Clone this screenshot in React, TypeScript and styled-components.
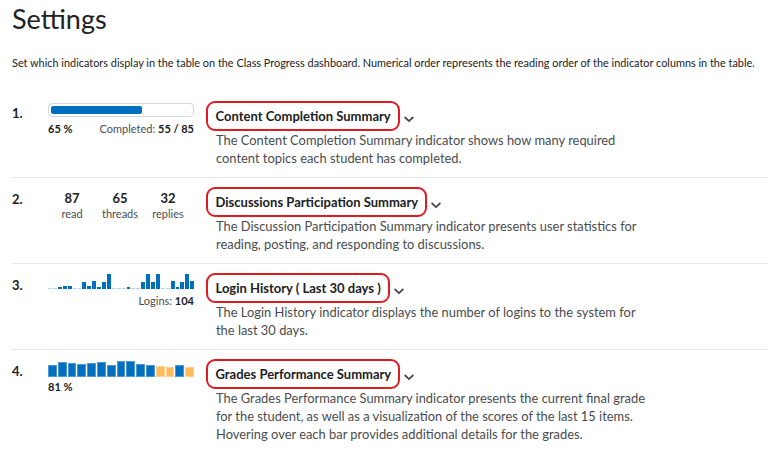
import React from 'react';
import styled, { createGlobalStyle } from 'styled-components';

const GlobalStyle = createGlobalStyle`
	* {
		box-sizing: border-box;
	}

	body {
		margin: 0;
		background: #ffffff;
		font-family: Lato, 'Noto Sans', sans-serif;
		color: #202122;
	}
`;

const loginDays = [0, 0, 1, 2, 2, 0, 0, 6, 2, 7, 1, 6, 14, 0, 0, 0, 1, 0, 0, 6, 14, 6, 14, 0, 0, 7, 1, 6, 14, 7];

const grades = [
	{ h: 12, low: false },
	{ h: 15, low: false },
	{ h: 14, low: false },
	{ h: 13, low: false },
	{ h: 14, low: false },
	{ h: 15, low: false },
	{ h: 12, low: false },
	{ h: 16, low: false },
	{ h: 16, low: false },
	{ h: 13, low: false },
	{ h: 12, low: false },
	{ h: 11, low: true },
	{ h: 10, low: true },
	{ h: 12, low: false },
	{ h: 10, low: true },
];

const Chevron = () => (
	<svg width='10' height='7' viewBox='0 0 10 7' fill='none'>
		<path d='M1.2 1.5 L5 5.2 L8.8 1.5' stroke='#494c4e' strokeWidth='1.8' strokeLinecap='round' strokeLinejoin='round' />
	</svg>
);

const CompletionGraphic = () => (
	<div>
		<ProgressTrack>
			<ProgressFill $percent={65} />
		</ProgressTrack>
		<CaptionRow>
			<b>65 %</b>
			<span>
				Completed: <b>55 / 85</b>
			</span>
		</CaptionRow>
	</div>
);

const DiscussionGraphic = () => (
	<StatGrid>
		{[
			{ value: 87, label: 'read' },
			{ value: 65, label: 'threads' },
			{ value: 32, label: 'replies' },
		].map(stat => (
			<Stat key={stat.label}>
				<strong>{stat.value}</strong>
				<span>{stat.label}</span>
			</Stat>
		))}
	</StatGrid>
);

const LoginGraphic = () => (
	<div>
		<LoginChart>
			{loginDays.map((value, i) => (
				<LoginBar key={i} $empty={value === 0} style={{ height: value === 0 ? 1 : value + 1 }} />
			))}
		</LoginChart>
		<CaptionRow $align='flex-end'>
			<span>
				Logins: <b>104</b>
			</span>
		</CaptionRow>
	</div>
);

const GradesGraphic = () => (
	<div>
		<GradesChart>
			{grades.map((grade, i) => (
				<GradeBar key={i} $low={grade.low} style={{ height: grade.h }} />
			))}
		</GradesChart>
		<CaptionRow $gap={3}>
			<b>81 %</b>
		</CaptionRow>
	</div>
);

// descriptions keep the line breaks of the settings page
const indicators = [
	{
		id: 1,
		title: 'Content Completion Summary',
		description: [
			'The Content Completion Summary indicator shows how many required',
			'content topics each student has completed.',
		],
		graphic: <CompletionGraphic />,
	},
	{
		id: 2,
		title: 'Discussions Participation Summary',
		description: [
			'The Discussion Participation Summary indicator presents user statistics for',
			'reading, posting, and responding to discussions.',
		],
		graphic: <DiscussionGraphic />,
	},
	{
		id: 3,
		title: 'Login History ( Last 30 days )',
		description: [
			'The Login History indicator displays the number of logins to the system for',
			'the last 30 days.',
		],
		graphic: <LoginGraphic />,
	},
	{
		id: 4,
		title: 'Grades Performance Summary',
		description: [
			'The Grades Performance Summary indicator presents the current final grade',
			'for the student, as well as a visualization of the scores of the last 15 items.',
			'Hovering over each bar provides additional details for the grades.',
		],
		graphic: <GradesGraphic />,
	},
];

const App = () => {
	return (
		<Page>
			<GlobalStyle />
			<Title>Settings</Title>
			<Intro>
				Set which indicators display in the table on the Class Progress dashboard. Numerical order represents the
				reading order of the indicator columns in the table.
			</Intro>

			<IndicatorList>
				{indicators.map(indicator => (
					<IndicatorRow key={indicator.id}>
						<Order>{indicator.id}.</Order>
						<GraphicCell>{indicator.graphic}</GraphicCell>
						<Details>
							<TitleLine>
								<TitleBox>{indicator.title}</TitleBox>
								<Chevron />
							</TitleLine>
							<Description>
								{indicator.description.map(line => (
									<span key={line}>{line}</span>
								))}
							</Description>
						</Details>
					</IndicatorRow>
				))}
			</IndicatorList>
		</Page>
	);
};

export default App;

const Page = styled.main`
	width: 768px;
	height: 456px;
	overflow: hidden;
	padding: 0 0 0 12px;
`;

const Title = styled.h1`
	margin: 0;
	padding-top: 1px;
	font-size: 27px;
	font-weight: 400;
	line-height: 36px;
	color: #202122;
`;

const Intro = styled.p`
	margin: 19px 0 0;
	font-size: 10.9px;
	line-height: 14px;
	color: #202122;
	white-space: nowrap;
`;

const IndicatorList = styled.ol`
	list-style: none;
	margin: 22px 0 0;
	padding: 0;
`;

const IndicatorRow = styled.li`
	display: grid;
	grid-template-columns: 36px 146px 1fr;
	padding: 9px 0 10px;
	border-bottom: 1px solid #e3e9f1;

	&:last-child {
		border-bottom: none;
	}
`;

const Order = styled.span`
	padding-top: 3px;
	font-size: 13px;
	font-weight: 700;
	line-height: 18px;
	color: #202122;
`;

const GraphicCell = styled.div`
	padding-top: 2px;
`;

const ProgressTrack = styled.div`
	height: 14px;
	padding: 2px;
	border: 1px solid #d3d9e3;
	border-radius: 4px;
	background: #ffffff;
`;

const ProgressFill = styled.div<{ $percent: number }>`
	width: ${props => props.$percent}%;
	height: 100%;
	border-radius: 2px;
	background: #006fbf;
`;

const CaptionRow = styled.div<{ $align?: string; $gap?: number }>`
	display: flex;
	justify-content: ${props => props.$align ?? 'space-between'};
	margin-top: ${props => props.$gap ?? 5}px;
	font-size: 11px;
	line-height: 14px;
	color: #494c4e;

	b {
		font-weight: 700;
		color: #202122;
	}
`;

const StatGrid = styled.div`
	display: grid;
	grid-template-columns: repeat(3, 48px);
	padding-top: 1px;
`;

const Stat = styled.div`
	display: flex;
	flex-direction: column;
	align-items: center;

	strong {
		font-size: 13px;
		font-weight: 700;
		line-height: 16px;
		color: #202122;
	}

	span {
		font-size: 11px;
		line-height: 15px;
		color: #494c4e;
	}
`;

const LoginChart = styled.div`
	display: flex;
	align-items: flex-end;
	gap: 1px;
	height: 15px;
	margin-top: -1px;
`;

const LoginBar = styled.div<{ $empty: boolean }>`
	flex: 1;
	background: ${props => (props.$empty ? '#b5d3ee' : '#006fbf')};
`;

const GradesChart = styled.div`
	display: flex;
	align-items: flex-end;
	gap: 1px;
	height: 16px;
`;

const GradeBar = styled.div<{ $low: boolean }>`
	flex: 1;
	border: 1px solid ${props => (props.$low ? '#ffd08f' : '#4d9ad2')};
	background: ${props => (props.$low ? '#ffba59' : '#006fbf')};
`;

const Details = styled.div`
	display: flex;
	flex-direction: column;
	padding-left: 12px;
`;

const TitleLine = styled.div`
	display: flex;
	align-items: center;
	gap: 4px;

	svg {
		margin-top: 6px;
	}
`;

const TitleBox = styled.h3`
	margin: 0;
	padding: 4px 7px 4px 7.5px;
	border: 2.5px solid #e11b22;
	border-radius: 9px;
	font-size: 13px;
	font-weight: 700;
	line-height: 18px;
	color: #202122;
`;

const Description = styled.p`
	display: flex;
	flex-direction: column;
	margin: 0;
	padding-left: 10px;
	font-size: 12.9px;
	line-height: 18px;
	color: #494c4e;
	white-space: nowrap;
`;
